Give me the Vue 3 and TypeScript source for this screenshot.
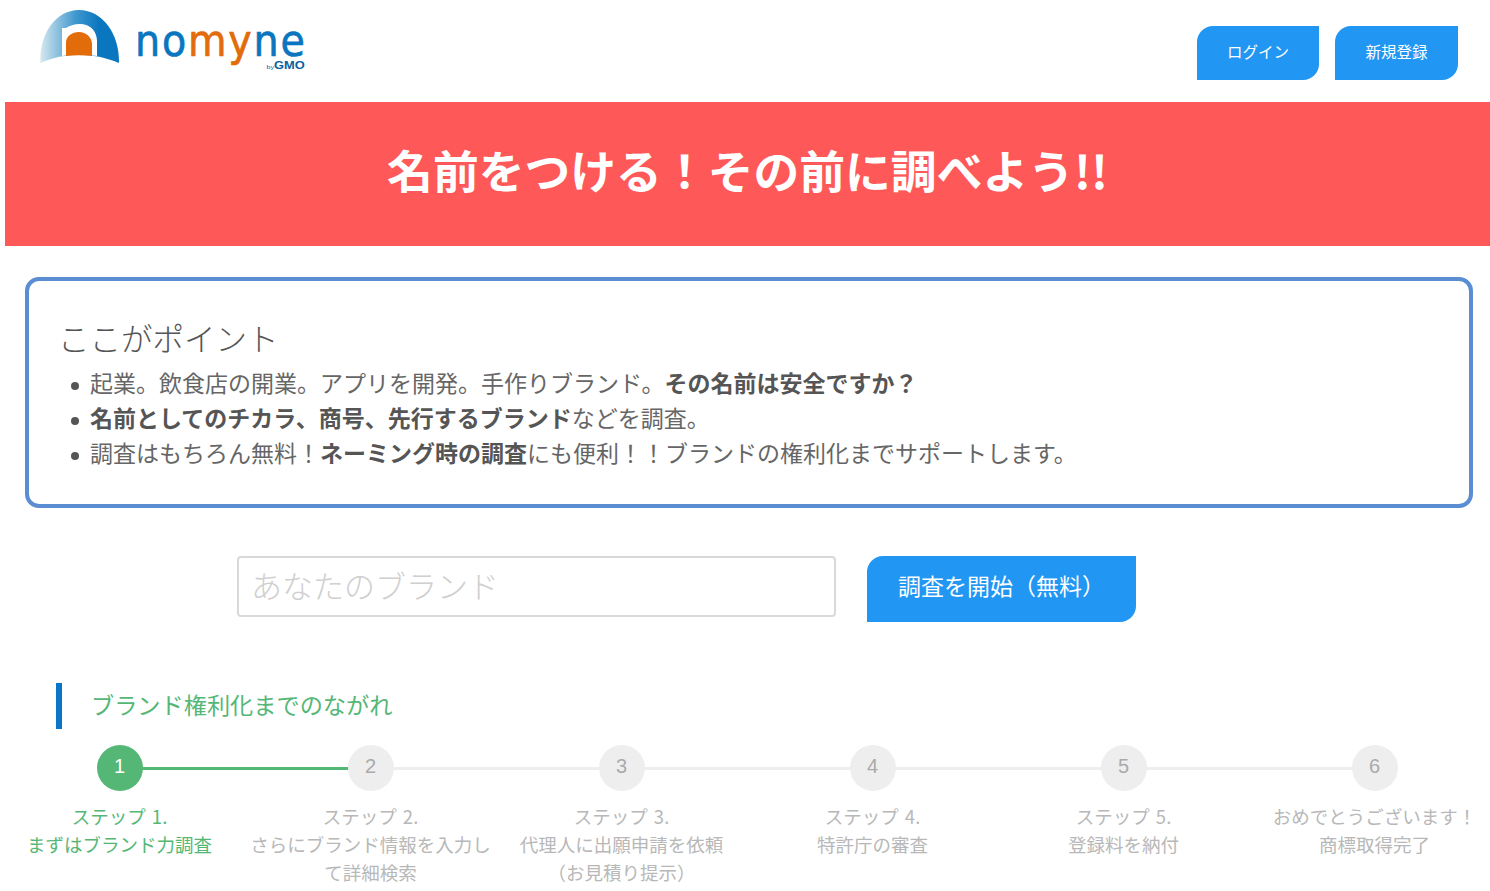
<script setup lang="ts">
interface Step { label: string; text: string[] }
const steps: Step[] = [
  { label: 'ステップ 1.', text: ['まずはブランド力調査'] },
  { label: 'ステップ 2.', text: ['さらにブランド情報を入力し', 'て詳細検索'] },
  { label: 'ステップ 3.', text: ['代理人に出願申請を依頼', '（お見積り提示）'] },
  { label: 'ステップ 4.', text: ['特許庁の審査'] },
  { label: 'ステップ 5.', text: ['登録料を納付'] },
  { label: 'おめでとうございます！', text: ['商標取得完了'] },
]
</script>

<template>
  <div class="page">
    <header class="top">
      <div class="logo">
        <svg class="mark" width="82" height="58" viewBox="0 0 82 58" aria-hidden="true">
          <defs>
            <linearGradient id="dome" x1="0" y1="0" x2="1" y2="0">
              <stop offset="0" stop-color="#d5e8ee" />
              <stop offset="0.45" stop-color="#3f97cf" />
              <stop offset="0.75" stop-color="#0a76c0" />
              <stop offset="1" stop-color="#0a76c0" />
            </linearGradient>
          </defs>
          <path d="M1.5 54 C0 26 16 1 40 1 C64 1 81 26 80 54 C54 43 26 43 1.5 54 Z" fill="url(#dome)" />
          <path d="M23 47 L23 19 L27 19 C30 17 35 15 41 15 C51 15 58 22 58 32 L58 47 C46 45 34 45 23 47 Z" fill="#fff" />
          <path d="M27 47 L27 34 C27 27 33 23 40 23 C47 23 53 28 53 35 L53 47 C44 46 35 46 27 47 Z" fill="#e36c0a" />
        </svg>
        <div class="word">
          <span class="blue">no</span><span class="orange">my</span><span class="blue">ne</span>
          <small class="gmo"><i>by</i>GMO</small>
        </div>
      </div>
      <nav class="actions">
        <a class="btn btn-login">ログイン</a>
        <a class="btn btn-signup">新規登録</a>
      </nav>
    </header>

    <section class="banner">
      <h1>名前をつける！その前に調べよう!!</h1>
    </section>

    <section class="points">
      <h2>ここがポイント</h2>
      <ul>
        <li>起業。飲食店の開業。アプリを開発。手作りブランド。<b>その名前は安全ですか？</b></li>
        <li><b>名前としてのチカラ、商号、先行するブランド</b>などを調査。</li>
        <li>調査はもちろん無料！<b>ネーミング時の調査</b>にも便利！！ブランドの権利化までサポートします。</li>
      </ul>
    </section>

    <form class="search" @submit.prevent>
      <input class="field" type="text" placeholder="あなたのブランド" />
      <button class="go" type="submit">調査を開始（無料）</button>
    </form>

    <h3 class="flow-title">ブランド権利化までのながれ</h3>

    <ol class="steps">
      <li v-for="(s, i) in steps" :key="i" class="step" :class="{ active: i === 0 }">
        <div class="dot">{{ i + 1 }}</div>
        <p class="caption">
          <span>{{ s.label }}</span>
          <span v-for="t in s.text" :key="t">{{ t }}</span>
        </p>
      </li>
    </ol>
  </div>
</template>

<style>
html, body { margin: 0; background: #fff; overflow: hidden; }
</style>

<style scoped>
.page {
  width: 1490px;
  height: 891px;
  overflow: hidden;
  font-family: "Noto Sans CJK JP", "Noto Sans", sans-serif;
  color: #555;
}
.top {
  height: 102px;
  box-sizing: border-box;
  padding: 9px 32px 0 39px;
  display: flex;
  justify-content: space-between;
  align-items: flex-start;
}
.logo { display: flex; align-items: flex-start; gap: 14px; }
.mark { display: block; }
.word {
  position: relative;
  font-family: "DejaVu Sans", sans-serif;
  font-size: 44px;
  line-height: 50px;
  letter-spacing: 2px;
  margin-top: 7px;
  white-space: nowrap;
  transform: scaleX(0.9);
  transform-origin: left top;
  -webkit-text-stroke: 0.7px currentColor;
}
.blue { color: #0a76c0; }
.orange { color: #e36c0a; }
.gmo {
  position: absolute;
  right: 2px;
  top: 43px;
  font-family: "Liberation Sans", sans-serif;
  font-size: 11px;
  line-height: 12px;
  font-weight: 700;
  letter-spacing: 0;
  color: #0a5f9e;
  -webkit-text-stroke: 0;
  transform: scaleX(1.3);
  transform-origin: right center;
}
.gmo i { font-size: 6px; font-style: normal; font-weight: 400; }
.actions { display: flex; gap: 16px; padding-top: 17px; }
.btn {
  height: 54px;
  box-sizing: border-box;
  padding-bottom: 5px;
  display: flex;
  align-items: center;
  justify-content: center;
  background: #2196f3;
  color: #fff;
  font-size: 15.5px;
  border-radius: 16px 0 16px 0;
}
.btn-login { width: 122px; }
.btn-signup { width: 123px; }
.banner {
  margin-left: 5px;
  height: 144px;
  box-sizing: border-box;
  padding-bottom: 9px;
  background: #ff5858;
  display: flex;
  align-items: center;
  justify-content: center;
}
.banner h1 {
  margin: 0;
  color: #fff;
  font-size: 45.8px;
  font-weight: 700;
  line-height: 1;
}
.points {
  margin: 31px 17px 0 25px;
  height: 231px;
  box-sizing: border-box;
  border: 4px solid #5b8dd3;
  border-radius: 14px;
  padding: 36px 32px 0 29px;
}
.points h2 {
  margin: 0;
  font-size: 31.5px;
  line-height: 40px;
  font-weight: 300;
  color: #555;
}
.points ul { list-style: none; margin: 8px 0 0; padding: 0 0 0 32px; }
.points li { position: relative; font-size: 23px; line-height: 35px; font-weight: 400; color: #666; }
.points li::before {
  content: "";
  position: absolute;
  left: -19px;
  top: 17px;
  width: 8px;
  height: 8px;
  border-radius: 50%;
  background: #555;
}
.points b { font-weight: 700; color: #555; }
.search {
  margin: 48px 0 0 237px;
  display: flex;
  gap: 31px;
  align-items: flex-start;
}
.field {
  width: 599px;
  height: 61px;
  box-sizing: border-box;
  border: 2px solid #d9d9d9;
  border-radius: 4px;
  padding: 0 12px 5px;
  font: 300 31px "Noto Sans CJK JP", sans-serif;
  outline: none;
}
.field::placeholder { color: #cfcfcf; }
.go {
  width: 269px;
  height: 66px;
  border: 0;
  padding: 0 0 9px;
  background: #2196f3;
  color: #fff;
  font: 400 23px "Noto Sans CJK JP", sans-serif;
  border-radius: 16px 0 16px 0;
}
.flow-title {
  margin: 61px 0 0 56px;
  height: 46px;
  border-left: 6px solid #0a76c8;
  padding-left: 29px;
  font-size: 23.2px;
  font-weight: 400;
  line-height: 42px;
  color: #55b776;
}
.steps {
  list-style: none;
  margin: 16px 0 0 -6px;
  padding: 0;
  display: grid;
  grid-template-columns: repeat(6, 251px);
}
.step {
  position: relative;
  display: flex;
  flex-direction: column;
  align-items: center;
  color: #b8b8b8;
}
.step + .step::before {
  content: "";
  position: absolute;
  top: 21.5px;
  right: 50%;
  width: 100%;
  height: 3px;
  background: #eee;
}
.step:nth-child(2)::before { background: #55b776; }
.dot {
  position: relative;
  z-index: 1;
  width: 46px;
  height: 46px;
  box-sizing: border-box;
  padding-bottom: 3px;
  border-radius: 50%;
  background: #eee;
  color: #aaa;
  font-family: "Liberation Sans", sans-serif;
  font-size: 20px;
  display: flex;
  align-items: center;
  justify-content: center;
}
.active .dot { background: #55b776; color: #fff; }
.caption {
  margin: 11px 0 0;
  width: 243px;
  font-size: 18.5px;
  line-height: 28px;
  font-weight: 400;
  word-spacing: 2px;
  text-align: center;
}
.caption span { display: block; }
.active { color: #55b776; }
</style>
